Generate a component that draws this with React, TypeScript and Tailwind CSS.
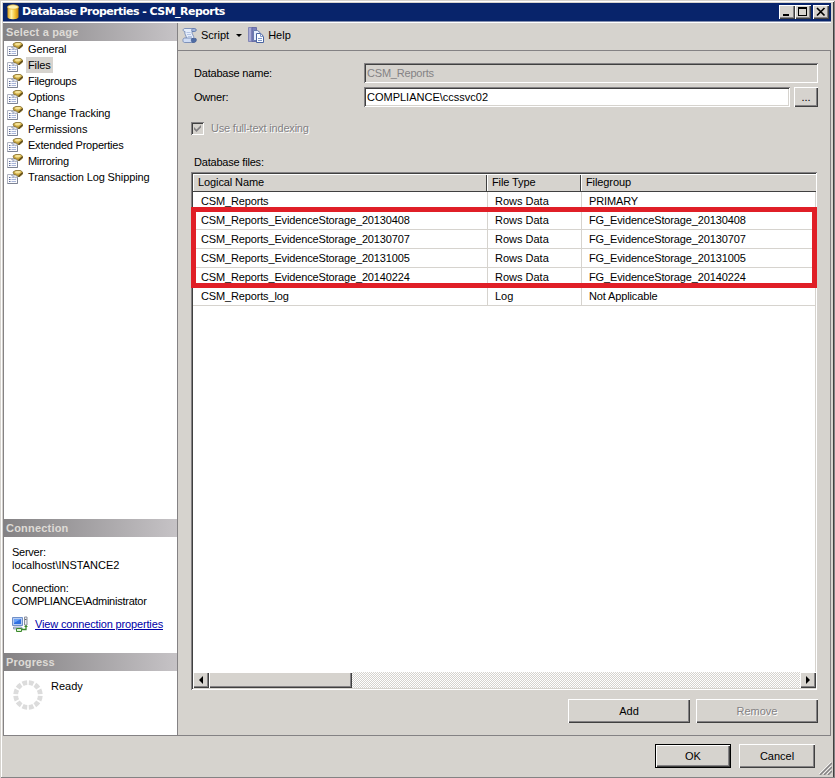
import React from 'react';
import clsx from 'clsx';

interface DatabaseFile {
  name: string;
  type: string;
  filegroup: string;
}

const pages = [
  { label: 'General', className: 'tracking-[-0.1px]' },
  { label: 'Files', className: 'tracking-[-0.1px]' },
  { label: 'Filegroups', className: 'tracking-[-0.3px]' },
  { label: 'Options', className: 'tracking-[-0.2px]' },
  { label: 'Change Tracking', className: 'tracking-[-0.05px]' },
  { label: 'Permissions', className: 'tracking-[-0.05px]' },
  { label: 'Extended Properties', className: 'tracking-[-0.22px]' },
  { label: 'Mirroring', className: 'tracking-[-0.3px]' },
  { label: 'Transaction Log Shipping', className: 'tracking-[-0.12px]' },
];

const files: DatabaseFile[] = [
  { name: 'CSM_Reports', type: 'Rows Data', filegroup: 'PRIMARY' },
  { name: 'CSM_Reports_EvidenceStorage_20130408', type: 'Rows Data', filegroup: 'FG_EvidenceStorage_20130408' },
  { name: 'CSM_Reports_EvidenceStorage_20130707', type: 'Rows Data', filegroup: 'FG_EvidenceStorage_20130707' },
  { name: 'CSM_Reports_EvidenceStorage_20131005', type: 'Rows Data', filegroup: 'FG_EvidenceStorage_20131005' },
  { name: 'CSM_Reports_EvidenceStorage_20140224', type: 'Rows Data', filegroup: 'FG_EvidenceStorage_20140224' },
  { name: 'CSM_Reports_log', type: 'Log', filegroup: 'Not Applicable' },
];

const raised =
  'bg-[#d6d3ce] shadow-[inset_1px_1px_0_#fff,inset_-1px_-1px_0_#404040,inset_-2px_-2px_0_#848284]';
const sunken =
  'shadow-[inset_1px_1px_0_#848284,inset_-1px_-1px_0_#fff,inset_2px_2px_0_#404040,inset_-2px_-2px_0_#d6d3ce]';

const DatabaseIcon = () => (
  <svg width="14" height="16" viewBox="0 0 14 16">
    <defs>
      <linearGradient id="cylinder">
        <stop offset="0" stopColor="#d99a10" />
        <stop offset="0.35" stopColor="#fff3a8" />
        <stop offset="0.65" stopColor="#f5c73c" />
        <stop offset="1" stopColor="#c98608" />
      </linearGradient>
    </defs>
    <path d="M1.500 3v10c0 3 11 3 11 0V3z" fill="url(#cylinder)" />
    <ellipse cx="7" cy="3" rx="5.500" ry="2.200" fill="#fdf2b4" stroke="#e0ac2c" strokeWidth="0.7" />
  </svg>
);

const PageIcon = () => (
  <svg width="16" height="16" viewBox="0 0 16 16">
    <path d="M.5 5.500h10v9H.5z" fill="#fbfbfd" stroke="#b0b4c0" />
    <path d="M.5 14.500h10v-6" fill="none" stroke="#7e8494" />
    <path d="M2 8.500h1.500M2 10.500h1.500M2 12.500h1.500" stroke="#5a6a98" />
    <path d="M4.500 8.500H7M4.500 10.500h4.500M4.500 12.500h4.500" stroke="#a6b4d8" />
    <path d="M4.500 6.500l4-1L10 7.500 9 9z" fill="#e6eaf4" stroke="#7e8494" strokeWidth="0.6" />
    <path d="M6 3l2.500-1.500h5L15.500 3v2L13 7.500h-2L9.500 6 7 5.500z" fill="#c9a63e" stroke="#86702e" strokeWidth="0.8" />
    <path d="M7.500 3l2-1h3.500l1 1-2 1.500H9z" fill="#f4e296" />
    <path d="M11.500 7.500L15.500 4" stroke="#54451c" strokeWidth="1.200" />
  </svg>
);

const ScriptIcon = () => (
  <svg width="17" height="17" viewBox="0 0 17 17">
    <path
      d="M4 1.500h9.500c2 0 2 3 0 3H11c-.5 2.500 2 4 2 7H5.500c0-3-2.500-4.500-1.500-7-2.500 0-2.500-3 0-3z"
      fill="#e6eefb"
      stroke="#7288b4"
      strokeWidth="0.9"
    />
    <path d="M11.500 1.500h2c2 0 2 3 0 3H11c-.5-1-.5-2 .5-3z" fill="#a3b6dc" stroke="#5e76a8" strokeWidth="0.8" />
    <path d="M2 12.500c0-1 1-1.500 2-1.500h7c-1 2 0 4 1.500 4.500H3.500c-1.200 0-1.800-1.500-1.500-3z" fill="#cfdcf4" stroke="#6a80b0" strokeWidth="0.8" />
    <path d="M11 11.500h4c1 1.500 0 3.500-1.500 4h-2c-1.500-1-1.500-3-.5-4z" fill="#4f6ca4" stroke="#3f588c" strokeWidth="0.6" />
    <path d="M5.500 5.500h4M6 7.500h4M7 9.500h4" stroke="#b4c4e4" />
  </svg>
);

const HelpIcon = () => (
  <svg width="17" height="17" viewBox="0 0 17 17">
    <path d="M.5.500h3.500v14H.5z" fill="#a9abd6" stroke="#7478ae" strokeWidth="0.8" />
    <path d="M4 .500h4.500v14H4z" fill="#7a80bc" stroke="#5a60a0" strokeWidth="0.8" />
    <path d="M5.500 3.500h4l2.500 2v8H5.500z" fill="#e6edfc" stroke="#6a7cae" />
    <path d="M8.500 6.500h4.500l2.500 3v6h-7z" fill="#fbfdff" stroke="#4a64a0" />
    <path d="M12.500 6.500v3h3M10 11.500h4M10 13.500h4" fill="none" stroke="#7e96c8" />
  </svg>
);

const ServerIcon = () => (
  <svg width="17" height="17" viewBox="0 0 17 17">
    <path d="M.5 1.500h10v8H.5z" fill="#b9cdf2" stroke="#7090c8" />
    <path d="M2 3h7v5H2z" fill="#2f6fe0" />
    <path d="M2 3h7L2 7z" fill="#6aa2f6" />
    <path d="M1.500 11h8l1 2h-9z" fill="#c9d2e4" stroke="#7384a8" strokeWidth="0.7" />
    <path d="M12.500 1h2.500v8h-2.500z" fill="#eceef2" stroke="#8a8f9c" />
    <path d="M13 3.500h1.500" stroke="#666" />
    <path d="M14 9.500v4H9.500" fill="none" stroke="#3c8a2c" strokeWidth="1.300" />
    <path d="M12 11l2-2 2 2z" fill="#3c8a2c" />
    <path d="M4.500 12.500h5v3h-5z" fill="#dff2d8" stroke="#3c8a2c" />
  </svg>
);

const ProgressRing = () => (
  <svg width="30" height="30" viewBox="0 0 30 30">
    <circle
      cx="15"
      cy="15"
      r="12.300"
      fill="none"
      stroke="#dcdcdc"
      strokeWidth="4.800"
      pathLength="120"
      strokeDasharray="7.4 2.6"
      strokeDashoffset="-1.3"
    />
  </svg>
);

const PanelHeader: React.FC<{ children: string; className?: string }> = ({ children, className }) => (
  <div className="h-[18px] shrink-0 bg-linear-to-r from-[#848284] to-[#c6c3c6] pl-0.5 text-[11px] leading-[18px] font-bold text-[#dedbd6]">
    <span className={className}>{children}</span>
  </div>
);

const Button: React.FC<{ label: string; className: string; disabled?: boolean }> = ({
  label,
  className,
  disabled,
}) => (
  <button
    type="button"
    disabled={disabled}
    className={clsx(
      raised,
      'flex items-center justify-center',
      disabled && 'text-[#848284] [text-shadow:1px_1px_0_#fff]',
      className,
    )}
  >
    {label}
  </button>
);

const TitleBar = () => (
  <div className="flex h-[18px] shrink-0 items-center bg-[#08246b] pr-0.5 pl-[3px]">
    <DatabaseIcon />
    <span className="ml-0.5 font-['DejaVu_Sans'] text-[11px] leading-[18px] font-bold tracking-[-0.54px] text-white">
      Database Properties - CSM_Reports
    </span>
    <div className="ml-auto flex">
      <button type="button" className={clsx(raised, 'flex h-3.5 w-4 items-center justify-center')}>
        <svg width="16" height="14" shapeRendering="crispEdges">
          <path d="M4 9h6v2H4z" />
        </svg>
      </button>
      <button type="button" className={clsx(raised, 'flex h-3.5 w-4 items-center justify-center')}>
        <svg width="16" height="14" shapeRendering="crispEdges">
          <path d="M3 2h9v9H3zM4 4v6h7V4z" fillRule="evenodd" />
        </svg>
      </button>
      <button type="button" className={clsx(raised, 'ml-0.5 flex h-3.5 w-4 items-center justify-center')}>
        <svg width="16" height="14">
          <path d="M4 3l7.500 7.500M11.500 3L4 10.500" stroke="#000" strokeWidth="1.700" />
        </svg>
      </button>
    </div>
  </div>
);

const Sidebar = () => (
  <div className="flex w-[175px] shrink-0 flex-col border-x border-[#848284] bg-white">
    <PanelHeader className="tracking-[0.17px]">Select a page</PanelHeader>
    <ul className="h-[478px] shrink-0">
      {pages.map((page) => (
        <li key={page.label} className="flex h-4 items-center pl-[3px]">
          <PageIcon />
          <span
            className={clsx(
              'ml-[3px] px-0.5 leading-4',
              page.label === 'Files' && 'bg-[#d6d3ce]',
              page.className,
            )}
          >
            {page.label}
          </span>
        </li>
      ))}
    </ul>
    <PanelHeader className="tracking-[0.2px]">Connection</PanelHeader>
    <div className="h-[116px] shrink-0 pt-[9px] pl-2 leading-[13px]">
      <p className="tracking-[-0.25px]">Server:</p>
      <p>localhost\INSTANCE2</p>
      <p className="mt-2.5 tracking-[-0.2px]">Connection:</p>
      <p className="tracking-[-0.25px]">COMPLIANCE\Administrator</p>
      <div className="mt-2 flex items-center">
        <ServerIcon />
        <a className="ml-1.5 tracking-[-0.15px] text-[#0000a8] underline">View connection properties</a>
      </div>
    </div>
    <PanelHeader className="tracking-[0.15px]">Progress</PanelHeader>
    <div className="flex pt-[9px] pl-[9px]">
      <ProgressRing />
      <span className="ml-2 leading-[13px]">Ready</span>
    </div>
  </div>
);

const HeaderCell: React.FC<{ children: string; className: string }> = ({ children, className }) => (
  <div className={clsx('h-[17px] bg-[#d6d3ce] pl-[5px] leading-4 tracking-[-0.1px]', className)}>{children}</div>
);

const FilesGrid = () => (
  <div className={clsx(sunken, 'relative mt-[3px] flex h-[518px] w-[626px] flex-col bg-white p-0.5 pr-px')}>
    <div className="flex border-b border-[#404040]">
      <HeaderCell className="w-[294px] shadow-[inset_1px_1px_0_#fff,inset_-1px_0_0_#404040]">Logical Name</HeaderCell>
      <HeaderCell className="w-[94px] pl-1.5 shadow-[inset_1px_1px_0_#fff,inset_-1px_0_0_#404040]">
        File Type
      </HeaderCell>
      <HeaderCell className="flex-1 pl-1.5 shadow-[inset_1px_1px_0_#fff]">Filegroup</HeaderCell>
    </div>
    {files.map((file) => (
      <div key={file.name} className="flex h-[19px] border-b border-[#d6d3ce] leading-[18px]">
        <div className="w-[295px] border-r border-[#d6d3ce] pl-2 tracking-[-0.15px]">{file.name}</div>
        <div className="w-[94px] border-r border-[#d6d3ce] pl-[7px]">{file.type}</div>
        <div className="pl-[7px] tracking-[-0.13px]">{file.filegroup}</div>
      </div>
    ))}
    <div className="absolute top-[35px] left-0 h-[81px] w-[626px] border-[5px] border-[#e01f27]" />
    <div className="mt-auto flex h-4 bg-[conic-gradient(#fff_25%,#d6d3ce_0_50%,#fff_0_75%,#d6d3ce_0)] bg-[length:2px_2px]">
      <div className={clsx(raised, 'flex w-4 items-center justify-center')}>
        <svg width="4" height="8">
          <path d="M4 0v8L0 4z" />
        </svg>
      </div>
      <div className={clsx(raised, 'w-[143px]')} />
      <div className={clsx(raised, 'ml-auto flex w-4 items-center justify-center')}>
        <svg width="4" height="8">
          <path d="M0 0v8l4-4z" />
        </svg>
      </div>
    </div>
  </div>
);

const FilesPage = () => (
  <div className="flex w-[653px] shrink-0 flex-col">
    <div className="flex h-[27px] items-center pb-[3px] pl-[3px]">
      <ScriptIcon />
      <span className="ml-[3px]">Script</span>
      <svg width="6" height="3" className="ml-[7px]">
        <path d="M0 0h6L3 3z" />
      </svg>
      <span className="ml-[6px]">
        <HelpIcon />
      </span>
      <span className="ml-[3px]">Help</span>
    </div>
    <div className="flex flex-1 flex-col border-t border-r border-[#848284] pl-[13px]">
      <div className="mt-3 flex h-5 items-center">
        <span className="w-[173px] pl-[3px] tracking-[-0.2px]">Database name:</span>
        <div className={clsx(sunken, 'h-5 w-[454px] px-[3px] leading-5 tracking-[-0.2px] text-[#848284]')}>
          CSM_Reports
        </div>
      </div>
      <div className="mt-1 flex h-5 items-center">
        <span className="w-[173px] pl-[3px] tracking-[-0.2px]">Owner:</span>
        <div className={clsx(sunken, 'h-5 w-[426px] bg-white px-[3px] leading-5')}>COMPLIANCE\ccssvc02</div>
        <Button label="..." className="ml-1 h-5 w-6" />
      </div>
      <label className="mt-[14px] flex h-[15px] items-center tracking-[-0.2px] text-[#848284] [text-shadow:1px_1px_0_#fff]">
        <span className={clsx(sunken, 'mr-[7px] flex size-[13px] items-center justify-center')}>
          <svg width="7" height="7">
            <path d="M0 2l2.500 2.500L7 0v2.500L2.500 7 0 4.500z" fill="#848284" />
          </svg>
        </span>
        Use full-text indexing
      </label>
      <div className="mt-[19px] h-[14px] pl-[3px] leading-[14px] tracking-[-0.2px]">Database files:</div>
      <FilesGrid />
      <div className="mt-[9px] flex gap-1.5 pl-[377px]">
        <Button label="Add" className="h-6 w-[122px]" />
        <Button label="Remove" disabled className="h-6 w-[122px]" />
      </div>
    </div>
  </div>
);

export default function App() {
  return (
    <div className="flex h-[778px] w-[835px] flex-col bg-[#d6d3ce] pt-[3px] pl-[3px] font-['Liberation_Sans',sans-serif] text-[11px] leading-[13px] whitespace-nowrap text-black shadow-[inset_1px_1px_0_#d6d3ce,inset_-1px_-1px_0_#848284,inset_2px_2px_0_#fff,inset_-2px_0_0_#404040]">
      <div className="w-[828px]">
        <TitleBar />
        <div className="h-0.5 border-b border-white bg-[#848fb0]" />
      </div>
      <div className="flex h-[713px] w-[828px] shrink-0 border-b border-[#848284]">
        <Sidebar />
        <FilesPage />
      </div>
      <div className="mt-2 flex gap-2 pl-[652px]">
        <div className="w-[76px] bg-black p-px">
          <Button label="OK" className="h-[22px] w-full" />
        </div>
        <Button label="Cancel" className="h-6 w-[76px]" />
        <svg width="13" height="13" className="-ml-1 translate-y-[7px] self-end">
          <path d="M1 13L13 1M5 13l8-8M9 13l4-4" stroke="#848284" strokeWidth="1.500" />
          <path d="M0 12L12 0M4 12l8-8M8 12l4-4" stroke="#fff" strokeWidth="0.700" />
        </svg>
      </div>
    </div>
  );
}
